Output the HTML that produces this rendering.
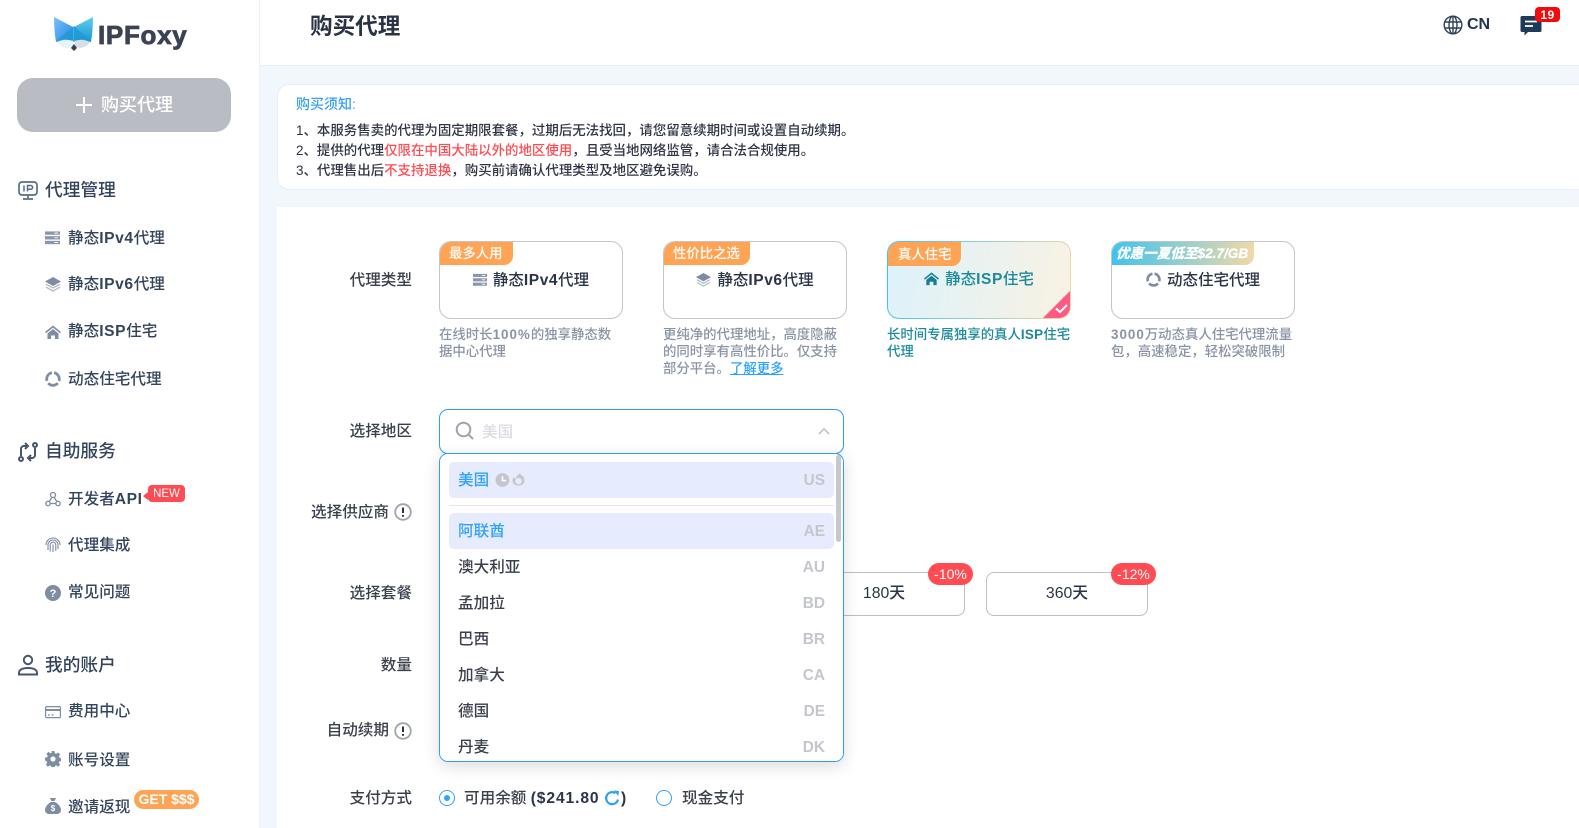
<!DOCTYPE html>
<html lang="zh"><head><meta charset="utf-8"><title>购买代理</title>
<style>
*{box-sizing:border-box}
html,body{margin:0;padding:0;width:1579px;height:828px;overflow:hidden;background:#f2f6fd;font-family:"Liberation Sans","Noto Sans CJK SC",sans-serif;color:#2b3446;font-weight:500}
.a{position:absolute}
.t{position:absolute;white-space:nowrap;line-height:20px;height:20px}
b{letter-spacing:.6px;font-weight:700}
.h{font-size:17.7px;color:#34445c;left:45px}
.m{font-size:15.6px;color:#34445c;left:68px}
.i{position:absolute;left:45px;width:16px;height:16px}
.g{position:absolute;left:17px;width:22px;height:22px}
.lb{font-size:15.6px;color:#3a3f4c;right:1167px}
.card{position:absolute;top:241px;width:184px;height:78px;border:1px solid #c3c5cd;border-radius:12px;background:#fff;overflow:hidden}
.tag{position:absolute;left:-1px;top:-1px;height:24px;background:#ffa454;color:#fff;font-size:13.4px;line-height:26px;padding-left:10px;border-bottom-right-radius:9px;white-space:nowrap}
.ct{position:absolute;top:29px;left:0;right:0;text-align:center;font-size:15.5px;line-height:20px;color:#2b3446;white-space:nowrap}
.ct svg{vertical-align:-2px;margin-right:6px}
.d{position:absolute;top:326px;width:186px;font-size:13.4px;line-height:17px;color:#8a93a5}
.d b{letter-spacing:1px}
.row{position:absolute;left:9px;width:385px;height:36px;line-height:37px;font-size:15.6px;padding-left:9px;color:#3a3f4c;border-radius:5px}
.row i{position:absolute;right:9px;top:0;font-style:normal;font-weight:700;font-size:15.4px;color:#c4c6cf}
.on{background:#e6ebfd;color:#2fa3fb}
.pl{position:absolute;top:572px;width:162px;height:44px;border:1px solid #bcbec7;border-radius:8px;background:#fff;text-align:center;line-height:41px;font-size:15.8px;color:#2b3446}
.bd{position:absolute;top:563px;width:45px;height:22px;border-radius:11px;background:#ff4b51;color:#fff;font-size:14px;line-height:23px;text-align:center}
.rd{position:absolute;top:790px;width:16px;height:16px;border-radius:50%;border:1.5px solid #2fa3fb;background:#fff}
</style></head>
<body>
<svg width="0" height="0" style="position:absolute"><defs>
<g id="srv"><rect x="0" y="1" width="16" height="3.6" fill="currentColor"/><rect x="0" y="6" width="16" height="3.6" fill="currentColor"/><rect x="0" y="11" width="16" height="3.6" fill="currentColor"/><path d="M10 2.8h4M10 7.8h4M10 12.8h4" stroke="#fff" stroke-width="1"/></g>
<g id="lay"><path d="M8 1L16 5.5 8 10 0 5.5z" fill="currentColor"/><path d="M1 8.2L8 12l7-3.8M1 11.2L8 15l7-3.8" fill="none" stroke="currentColor" stroke-width="1.3" opacity=".6"/></g>
<g id="hom"><path d="M8 1.5L0 8l1 1.2L8 3.6l7 5.6L16 8z" fill="currentColor"/><path d="M2.5 9.5L8 5l5.5 4.5V15h-3.5v-3.5H6V15H2.5z" fill="currentColor"/></g>
<g id="cyc"><circle cx="8" cy="8" r="6.3" fill="none" stroke="currentColor" stroke-width="2.8" stroke-dasharray="10.7 2.5" transform="rotate(-80 8 8)"/></g>
</defs></svg>

<!-- main background -->
<div class="a" style="left:259px;top:0;width:1320px;height:66px;background:#fff;border-bottom:1px solid #e9eef6"></div>
<div class="a" style="left:277px;top:84px;width:1340px;height:106px;background:#fff;border:1px solid #e8edf6;border-radius:12px"></div>
<div class="a" style="left:277px;top:207px;width:1302px;height:621px;background:#fff"></div>

<!-- sidebar -->
<div class="a" style="left:0;top:0;width:260px;height:828px;background:#fff;border-right:1px solid #eef1f6"></div>
<svg class="a" style="left:53px;top:16px" width="42" height="35" viewBox="0 0 42 35">
<defs><linearGradient id="lg1" x1="0" y1="0" x2="1" y2="1"><stop offset="0" stop-color="#7cc2fb"/><stop offset="1" stop-color="#1f86e0"/></linearGradient><linearGradient id="lg2" x1="0" y1="0" x2="0" y2="1"><stop offset="0" stop-color="#5fd0ee"/><stop offset="1" stop-color="#1a93d2"/></linearGradient></defs>
<path d="M1 1L20 11 20 24 3 26Q1 14 1 1z" fill="url(#lg1)"/>
<path d="M40 1L21 11 21 24 38 26Q40 14 40 1z" fill="url(#lg2)"/>
<path d="M3 25L21 10 38 25 30 23 21 26 11 23z" fill="#1e9ad6" opacity=".8"/>
<path d="M4 26Q12 22 20 25L20 31 14 32Q7 31 4 26z" fill="#e6f4f8"/>
<path d="M37 26Q29 22 22 25L22 31 27 32Q34 31 37 26z" fill="#d6dfe3"/>
<path d="M21 28L24 32 21 35 18 32z" fill="#3a3f52"/>
</svg>
<div class="t" style="left:98px;top:21px;height:28px;line-height:28px;font-size:26px;font-weight:700;color:#3c4256;letter-spacing:.7px;-webkit-text-stroke:.8px #3c4256">IPFoxy</div>

<div class="a" style="left:17px;top:78px;width:214px;height:54px;border-radius:16px;background:#babcc4"></div>
<svg class="a" style="left:76px;top:97px" width="16" height="16"><path d="M8 0v16M0 8h16" stroke="#fff" stroke-width="2"/></svg>
<div class="t" style="left:101px;top:95px;font-size:18px;color:#fff">购买代理</div>

<svg class="g" style="top:179px" viewBox="0 0 22 22" fill="none" stroke="#5a6d85" stroke-width="1.7"><rect x="2" y="3" width="18" height="13" rx="3"/><path d="M11 16v3M6 20h10"/><path d="M7 6.5v6M10.5 12.5v-6h3.2a1.8 1.8 0 0 1 0 3.8h-3.2" stroke-width="1.5"/></svg>
<div class="t h" style="top:180px">代理管理</div>

<svg class="i" style="top:230px;width:15px;color:#8a97a9" viewBox="0 0 16 16"><use href="#srv"/></svg>
<div class="t m" style="top:229px">静态<b>IPv4</b>代理</div>
<svg class="i" style="top:276px;color:#7e8da2" viewBox="0 0 16 16"><use href="#lay"/></svg>
<div class="t m" style="top:275px">静态<b>IPv6</b>代理</div>
<svg class="i" style="top:324px;color:#7e8da2" viewBox="0 0 16 16"><use href="#hom"/></svg>
<div class="t m" style="top:322px">静态<b>ISP</b>住宅</div>
<svg class="i" style="top:371px;color:#7e8da2" viewBox="0 0 16 16"><use href="#cyc"/></svg>
<div class="t m" style="top:370px">动态住宅代理</div>

<svg class="g" style="top:441px;left:17px" viewBox="0 0 22 22" fill="none" stroke="#46566e" stroke-width="2"><circle cx="4" cy="18" r="2"/><circle cx="18" cy="4" r="2"/><path d="M4 15V8a3 3 0 0 1 3-3h3M8 2L11 5 8 8M18 7v7a3 3 0 0 1-3 3h-3M14 14l-3 3 3 3"/></svg>
<div class="t h" style="top:441px;left:45px">自助服务</div>

<svg class="i" style="top:491px;color:#7e8da2" viewBox="0 0 16 16" fill="none" stroke="#7e8da2" stroke-width="1.3"><circle cx="8" cy="4" r="2.5"/><circle cx="3" cy="12.5" r="2.2"/><circle cx="13" cy="12.5" r="2.2"/><path d="M6.8 6.5L4.2 10.5M9.2 6.5L11.8 10.5M5.3 12.5h5.4"/></svg>
<div class="t m" style="top:490px">开发者<b>API</b></div>
<div class="a" style="left:148px;top:485px;width:37px;height:17px;background:#ff4b51;border-radius:4px;color:#fff;font-size:11.5px;line-height:18px;text-align:center">NEW</div>
<div class="a" style="left:143px;top:492px;width:0;height:0;border:4px solid transparent;border-right:5px solid #ff4b51;border-left:0"></div>

<svg class="i" style="top:537px" viewBox="0 0 16 16" fill="none" stroke="#7e8da2" stroke-width="1.1"><path d="M1 8a7 7 0 0 1 14 0M3 13V8a5 5 0 0 1 10 0v4M5.2 14.500V8a2.800 2.800 0 0 1 5.600 0v6M8 15V7.500"/></svg>
<div class="t m" style="top:536px">代理集成</div>
<svg class="i" style="top:585px" viewBox="0 0 16 16"><circle cx="8" cy="8" r="8" fill="#7e8da2"/><text x="8" y="12" text-anchor="middle" font-size="11" font-weight="700" fill="#fff" font-family="Liberation Sans">?</text></svg>
<div class="t m" style="top:583px">常见问题</div>

<svg class="g" style="top:654px;left:17px" viewBox="0 0 22 22" fill="none" stroke="#46566e" stroke-width="2"><circle cx="11" cy="6" r="4.2"/><path d="M2 20.5v-1.5c0-3 3-5 9-5s9 2 9 5v1.5z"/></svg>
<div class="t h" style="top:655px">我的账户</div>

<svg class="i" style="top:704px" viewBox="0 0 16 16" fill="none" stroke="#7e8da2" stroke-width="1.2"><rect x=".6" y="2.6" width="14.8" height="11" rx="1"/><path d="M.6 6h14.8" stroke-width="2"/><path d="M3 11h2M6.5 11h2"/></svg>
<div class="t m" style="top:702px">费用中心</div>
<svg class="i" style="top:751px" viewBox="0 0 16 16"><path d="M6.6 0h2.8l.4 2.2 1.4.6 1.9-1.3 2 2-1.3 1.9.6 1.4 2.1.4v2.8l-2.1.4-.6 1.4 1.3 1.9-2 2-1.9-1.3-1.4.6-.4 2.2H6.6l-.4-2.2-1.4-.6-1.9 1.3-2-2 1.3-1.9-.6-1.4L0 9.4V6.6l2.2-.4.6-1.4L1.5 2.9l2-2 1.9 1.3 1.4-.6z" fill="#7e8da2"/><circle cx="8" cy="8" r="2.6" fill="#fff"/></svg>
<div class="t m" style="top:751px">账号设置</div>
<svg class="i" style="top:798px" viewBox="0 0 16 16"><path d="M5 0h6L9.6 3H6.4z" fill="#7e8da2"/><path d="M6 4h4c3 1.5 6 5 6 8 0 2.5-2 4-4 4H4c-2 0-4-1.5-4-4 0-3 3-6.500 6-8z" fill="#7e8da2"/><text x="8" y="13" text-anchor="middle" font-size="8" font-weight="700" fill="#fff" font-family="Liberation Sans">$</text></svg>
<div class="t m" style="top:798px">邀请返现</div>
<div class="a" style="left:134px;top:790px;width:65px;height:19px;background:#ffa454;border-radius:10px;color:#fff;font-size:14px;font-weight:700;line-height:19px;text-align:center;white-space:nowrap">GET $$$</div>

<!-- header -->
<div class="t" style="left:310px;top:13px;height:28px;line-height:28px;font-size:22.6px;font-weight:700;color:#2a3346">购买代理</div>
<svg class="a" style="left:1443px;top:15px" width="20" height="20" viewBox="0 0 20 20" fill="none" stroke="#2f4158" stroke-width="1.4"><circle cx="10" cy="10" r="8.8"/><ellipse cx="10" cy="10" rx="4" ry="8.8"/><path d="M1.5 7h17M1.500 13h17M10 1v18"/></svg>
<div class="t" style="left:1467px;top:15px;font-size:16px;font-weight:700;color:#24344c">CN</div>
<svg class="a" style="left:1520px;top:15px" width="22" height="21" viewBox="0 0 22 21"><path d="M2 1h18a1.500 1.500 0 0 1 1.500 1.500v13A1.500 1.500 0 0 1 20 17H8l-3.500 3.500V17H2A1.500 1.500 0 0 1 .5 15.500v-13A1.500 1.500 0 0 1 2 1z" fill="#1f3a58"/><path d="M5 6.500h12M5 11h8" stroke="#fff" stroke-width="1.800"/></svg>
<div class="a" style="left:1535px;top:7px;width:25px;height:15px;background:#f40a0a;border-radius:4px;color:#fff;font-size:12px;font-weight:700;line-height:16px;text-align:center;letter-spacing:.5px">19</div>

<!-- notice -->
<div class="t" style="left:296px;top:94px;font-size:14px;color:#38a0f6">购买须知:</div>
<div class="t" style="left:296px;top:121px;font-size:13.45px;color:#2f3444">1、本服务售卖的代理为固定期限套餐，过期后无法找回，请您留意续期时间或设置自动续期。</div>
<div class="t" style="left:296px;top:141px;font-size:13.45px;color:#2f3444">2、提供的代理<span style="color:#ff4b51">仅限在中国大陆以外的地区使用</span>，且受当地网络监管，请合法合规使用。</div>
<div class="t" style="left:296px;top:161px;font-size:13.45px;color:#2f3444">3、代理售出后<span style="color:#ff4b51">不支持退换</span>，购买前请确认代理类型及地区避免误购。</div>

<!-- labels -->
<div class="t lb" style="top:271px">代理类型</div>
<div class="t lb" style="top:422px">选择地区</div>
<div class="t lb" style="top:503px;right:1190px">选择供应商</div>
<div class="t lb" style="top:584px">选择套餐</div>
<div class="t lb" style="top:656px">数量</div>
<div class="t lb" style="top:721px;right:1190px">自动续期</div>
<div class="t lb" style="top:789px">支付方式</div>
<svg class="a" style="left:394px;top:503px" width="18" height="18" viewBox="0 0 18 18"><circle cx="9" cy="9" r="7.800" fill="none" stroke="#a0a3ad" stroke-width="1.800"/><path d="M9 4.500v5.500M9 12v1.800" stroke="#2b3446" stroke-width="2"/></svg>
<svg class="a" style="left:394px;top:722px" width="18" height="18" viewBox="0 0 18 18"><circle cx="9" cy="9" r="7.800" fill="none" stroke="#a0a3ad" stroke-width="1.800"/><path d="M9 4.500v5.500M9 12v1.800" stroke="#2b3446" stroke-width="2"/></svg>

<!-- cards -->
<div class="card" style="left:439px">
  <div class="tag" style="width:74px">最多人用</div>
  <div class="ct"><svg width="14" height="14" viewBox="0 0 16 16" style="color:#8a97a9"><use href="#srv"/></svg>静态<b>IPv4</b>代理</div>
</div>
<div class="card" style="left:663px">
  <div class="tag" style="width:87px">性价比之选</div>
  <div class="ct"><svg width="15" height="15" viewBox="0 0 16 16" style="color:#7e8da2"><use href="#lay"/></svg>静态<b>IPv6</b>代理</div>
</div>
<div class="a" style="left:887px;top:241px;width:184px;height:78px;border-radius:12px;padding:1px;background:linear-gradient(100deg,#3ec3ef,#f3d9a6)">
  <div style="position:relative;width:182px;height:76px;border-radius:11px;overflow:hidden;background:linear-gradient(100deg,#dcf2fb,#f9f2e3)">
    <div class="tag" style="left:0;top:0;width:73px">真人住宅</div>
    <div class="ct" style="top:28px;color:#1b8a9a"><svg width="15" height="15" viewBox="0 0 16 16" style="color:#147f8f"><use href="#hom"/></svg>静态<b>ISP</b>住宅</div>
    <div class="a" style="right:0;bottom:0;width:0;height:0;border-left:27px solid transparent;border-bottom:27px solid #ff5a84"></div>
    <svg class="a" style="right:2px;bottom:4px" width="13" height="11" viewBox="0 0 13 11"><path d="M1 5.500l4 3.500 7-7" fill="none" stroke="#fff" stroke-width="2"/></svg>
  </div>
</div>
<div class="card" style="left:1111px">
  <div class="tag" style="width:143px;padding-left:5px;background:linear-gradient(90deg,#3fc3ee,#f0d9a8);font-style:italic;font-weight:700;font-size:13.6px;-webkit-text-stroke:.3px #fff">优惠一夏低至$2.7/GB</div>
  <div class="ct"><svg width="15" height="15" viewBox="0 0 16 16" style="color:#7e8da2"><use href="#cyc"/></svg>动态住宅代理</div>
</div>
<div class="d" style="left:439px;width:178px">在线时长<b>100%</b>的独享静态数据中心代理</div>
<div class="d" style="left:663px">更纯净的代理地址，高度隐蔽的同时享有高性价比。仅支持部分平台。<span style="color:#2fa3fb;text-decoration:underline">了解更多</span></div>
<div class="d" style="left:887px;color:#1b8a9a">长时间专属独享的真人<b style="letter-spacing:.3px">ISP</b>住宅代理</div>
<div class="d" style="left:1111px"><b>3000</b>万动态真人住宅代理流量包，高速稳定，轻松突破限制</div>

<!-- plan buttons -->
<div class="pl" style="left:803px"><span style="display:inline-block;width:160px">180天</span></div>
<div class="pl" style="left:986px">360天</div>
<div class="bd" style="left:928px">-10%</div>
<div class="bd" style="left:1111px">-12%</div>

<!-- payment -->
<div class="rd" style="left:439px"></div>
<div class="a" style="left:444px;top:795px;width:6px;height:6px;border-radius:50%;background:#2fa3fb"></div>
<div class="t" style="left:464px;top:789px;font-size:15.6px;color:#3a3f4c">可用余额 <b style="color:#2b3446;letter-spacing:.9px">($241.80</b></div>
<svg class="a" style="left:604px;top:790px" width="17" height="16" viewBox="0 0 17 16" fill="none" stroke="#2f9ff5" stroke-width="2.200"><path d="M14 9.500A6 6 0 1 1 11.500 3.200"/><path d="M10 .5l5 .5-.8 5z" fill="#2f9ff5" stroke="none"/></svg>
<div class="t" style="left:621px;top:789px;font-size:15.6px;font-weight:700;color:#2b3446">)</div>
<div class="rd" style="left:656px"></div>
<div class="t" style="left:682px;top:789px;font-size:15.6px;color:#3a3f4c">现金支付</div>

<!-- select -->
<div class="a" style="left:439px;top:409px;width:405px;height:45px;border:1px solid #2f9ff5;border-radius:9px;background:#fff;box-shadow:0 2px 8px rgba(0,0,0,.05)"></div>
<svg class="a" style="left:455px;top:421px" width="20" height="20" viewBox="0 0 20 20" fill="none" stroke="#a0a3ad" stroke-width="2"><circle cx="8.500" cy="8.500" r="6.800"/><path d="M13.500 13.500l4.500 4.500"/></svg>
<div class="t" style="left:482px;top:423px;font-size:15.6px;color:#dcdde2">美国</div>
<svg class="a" style="left:818px;top:427px" width="12" height="9" viewBox="0 0 12 9" fill="none" stroke="#c4c6cf" stroke-width="1.800"><path d="M1 7l5-5 5 5"/></svg>

<div class="a" style="left:439px;top:453px;width:405px;height:309px;border:1px solid #2f9ff5;border-radius:9px;background:#fff;overflow:hidden;box-shadow:0 4px 16px rgba(0,0,0,.14)"></div>
<div class="a" style="left:440px;top:454px;width:403px;height:307px;overflow:hidden;border-radius:8px;background:#fff">
  <div class="row on" style="top:8px">美国<i>US</i>
    <svg class="a" style="left:46px;top:10px" width="32" height="16" viewBox="0 0 30 15"><circle cx="7" cy="7.500" r="6.500" fill="#c4c6cf"/><path d="M7 4v4h3.500" stroke="#fff" stroke-width="1.500" fill="none"/><path d="M23.500 1c.5 2 2.500 2.500 3.500 4 1 2 1 4-.5 6a6.500 6.500 0 0 1-9 0c-1.500-2-1.500-4 0-6 .5 1 1.500 1.500 2 1 .5-2 2-3.500 4-5z" fill="#c4c6cf"/><circle cx="22" cy="8.500" r="3" fill="#e6ebfd"/></svg>
  </div>
  <div class="a" style="left:9px;top:51px;width:385px;height:1px;background:#e6e6ea"></div>
  <div class="row on" style="top:59px">阿联酋<i>AE</i></div>
  <div class="row" style="top:95px">澳大利亚<i>AU</i></div>
  <div class="row" style="top:131px">孟加拉<i>BD</i></div>
  <div class="row" style="top:167px">巴西<i>BR</i></div>
  <div class="row" style="top:203px">加拿大<i>CA</i></div>
  <div class="row" style="top:239px">德国<i>DE</i></div>
  <div class="row" style="top:275px">丹麦<i>DK</i></div>
  <div class="a" style="left:396px;top:1px;width:5px;height:87px;border-radius:3px;background:#c6c8cf"></div>
</div>
</body></html>
